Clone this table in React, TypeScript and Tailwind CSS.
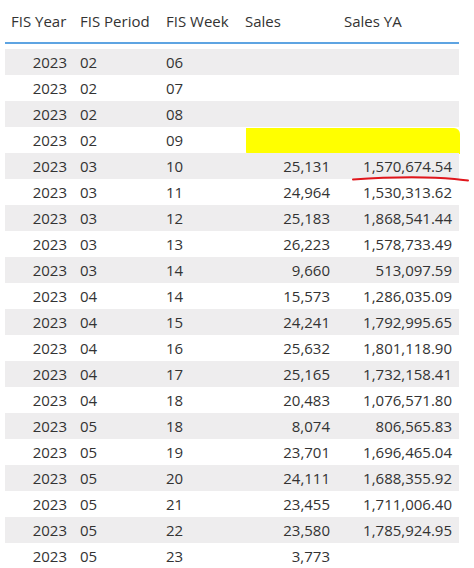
const rows: [string, string, string, string, string][] = [
  ["2023", "02", "06", "", ""],
  ["2023", "02", "07", "", ""],
  ["2023", "02", "08", "", ""],
  ["2023", "02", "09", "", ""],
  ["2023", "03", "10", "25,131", "1,570,674.54"],
  ["2023", "03", "11", "24,964", "1,530,313.62"],
  ["2023", "03", "12", "25,183", "1,868,541.44"],
  ["2023", "03", "13", "26,223", "1,578,733.49"],
  ["2023", "03", "14", "9,660", "513,097.59"],
  ["2023", "04", "14", "15,573", "1,286,035.09"],
  ["2023", "04", "15", "24,241", "1,792,995.65"],
  ["2023", "04", "16", "25,632", "1,801,118.90"],
  ["2023", "04", "17", "25,165", "1,732,158.41"],
  ["2023", "04", "18", "20,483", "1,076,571.80"],
  ["2023", "05", "18", "8,074", "806,565.83"],
  ["2023", "05", "19", "23,701", "1,696,465.04"],
  ["2023", "05", "20", "24,111", "1,688,355.92"],
  ["2023", "05", "21", "23,455", "1,711,006.40"],
  ["2023", "05", "22", "23,580", "1,785,924.95"],
  ["2023", "05", "23", "3,773", ""],
];

const cols = "grid grid-cols-[70px_86px_79px_99px_120px]";

export default function App() {
  return (
    <div
      className="relative w-[474px] h-[568px] overflow-hidden bg-white text-[15px] text-[#333333]"
      style={{ fontFamily: '"Open Sans", "Noto Sans", sans-serif' }}
    >
      <div className="ml-[5px] w-[454px]">
        {/* header */}
        <div className={`${cols} h-[42px] items-center pt-[1px]`}>
          <div className="pl-[6px]">FIS Year</div>
          <div className="pl-[5px]">FIS Period</div>
          <div className="pl-[5px]">FIS Week</div>
          <div className="pl-[5px]">Sales</div>
          <div className="pl-[5px]">Sales YA</div>
        </div>
        <div className="h-[2px] bg-[#5ea4e2]" />
        <div className="h-[5px]" />

        {rows.map((r, i) => (
          <div
            key={i}
            className={`${cols} relative h-[26px] items-center ${i % 2 === 0 ? "bg-[#eeedee]" : "bg-white"}`}
          >
            <div className="text-right pr-[8px]">{r[0]}</div>
            <div className="pl-[5px]">{r[1]}</div>
            <div className="pl-[5px]">{r[2]}</div>
            <div className="text-right pr-[9px]">{r[3]}</div>
            <div className="text-right pr-[7px]">{r[4]}</div>
            {i === 3 && (
              <div className="absolute left-[241px] top-[1px] w-[214px] h-[26px] bg-[#ffff00] rounded-tr-[6px] rounded-bl-[2px]" />
            )}
          </div>
        ))}
      </div>

      {/* red underline marker */}
      <svg className="absolute left-[350px] top-[174px]" width="122" height="10" viewBox="0 0 122 10">
        <path
          d="M3 5.5 C 25 4, 50 3, 75 3.5 S 105 5, 118 6.5"
          fill="none"
          stroke="#e0161c"
          strokeWidth="2"
          strokeLinecap="round"
        />
      </svg>
    </div>
  );
}
